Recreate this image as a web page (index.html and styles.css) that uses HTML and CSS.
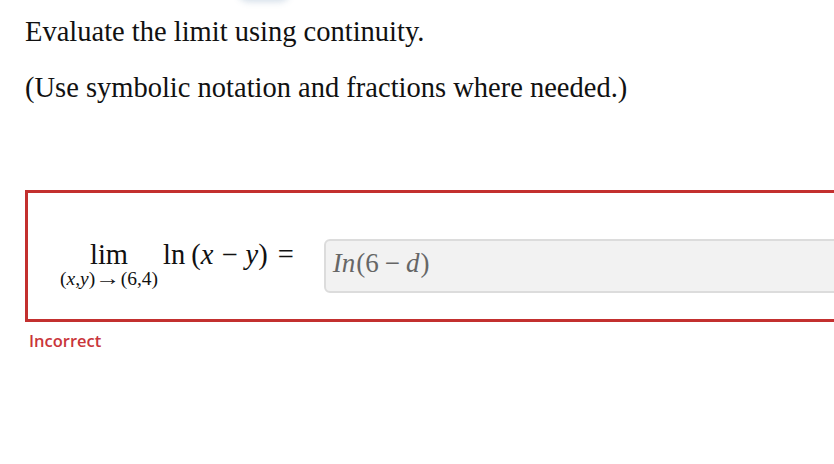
FILE: index.html
```html
<!DOCTYPE html>
<html lang="en">
<head>
    <meta charset="UTF-8">
    <title>Evaluate the limit</title>
    <link rel="stylesheet" href="styles.css">
</head>
<body>
    <div class="top-shadow"></div>
    <div class="question">
        <p class="prompt">Evaluate the limit using continuity.</p>
        <p class="prompt">(Use symbolic notation and fractions where needed.)</p>

        <div class="answer-box incorrect">
            <div class="math">
                <span class="lim">
                    <span class="lim-word">lim</span>
                    <span class="lim-sub">(<i>x</i>,<i>y</i>)<span class="arrow">&rarr;</span>(6,4)</span>
                </span>
                <span class="expr">ln<span class="fn-gap"></span>(<i>x</i><span class="op">&minus;</span><i>y</i>)<span class="rel">=</span></span>
            </div>
            <div class="answer-input"><i>In</i>(6<span class="op">&minus;</span><i>d</i>)</div>
        </div>

        <div class="feedback">Incorrect</div>
    </div>
</body>
</html>
```

FILE: styles.css
```css
html, body {
    margin: 0;
    overflow: hidden;
    background: white;
}
body {
    position: relative;
    width: 834px;
    height: 464px;
}
.top-shadow {
    position: absolute;
    top: -24px;
    left: 238px;
    width: 52px;
    height: 24px;
    border-radius: 10px;
    box-shadow: 0 2px 6px rgba(90, 130, 170, 0.25);
}
.question {
    padding: 16px 0 0 25px;
}
.prompt {
    font-family: "Liberation Serif", "Times New Roman", serif;
    font-size: 28.5px;
    color: #111;
    margin: 0 0 25px;
    line-height: 31px;
}
.answer-box {
    display: flex;
    align-items: flex-start;
    margin-top: 87px;
    margin-right: -40px;
    height: 132px;
    padding-left: 32px;
    box-sizing: border-box;
    border: 3px solid #c3302f;
}
.math {
    display: flex;
    align-items: flex-start;
    margin-top: 47px;
    font-family: "Liberation Serif", "Times New Roman", serif;
    color: #111;
}
.lim {
    display: flex;
    flex-direction: column;
    align-items: center;
}
.lim-word {
    font-size: 28.5px;
    line-height: 30px;
}
.lim-sub {
    font-size: 19.5px;
    line-height: 20px;
    margin-top: -1px;
    white-space: nowrap;
}
.arrow {
    display: inline-block;
    transform: scaleX(1.3);
    margin: 0 3px;
}
.expr {
    font-size: 28.5px;
    line-height: 30px;
    margin-left: 5px;
    white-space: nowrap;
}
.fn-gap {
    display: inline-block;
    width: 6px;
}
.op {
    margin: 0 8px;
}
.rel {
    margin-left: 10px;
}
.answer-input {
    flex: 1;
    margin: 46px 0 0 30px;
    height: 54px;
    box-sizing: border-box;
    border: 2px solid #dcdcdc;
    border-radius: 6px;
    background: #f2f2f2;
    padding-left: 7px;
    font-family: "Liberation Serif", "Times New Roman", serif;
    font-size: 27px;
    line-height: 45px;
    color: #666;
}
.answer-input i {
    margin-right: 1px;
}
.answer-input .op {
    margin: 0 6px;
}
.feedback {
    font-family: "Open Sans", "Noto Sans", sans-serif;
    font-weight: 600;
    font-size: 16.5px;
    line-height: 22px;
    color: #c9353a;
    margin-top: 8px;
    margin-left: 4px;
}
```
